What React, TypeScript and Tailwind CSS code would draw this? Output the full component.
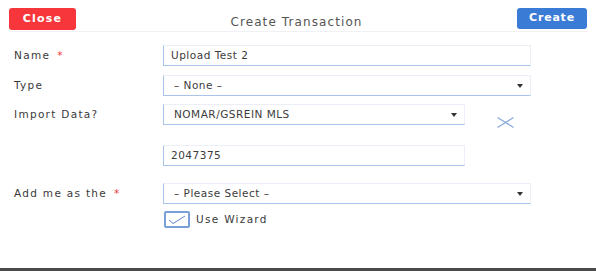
const font = { fontFamily: '"DejaVu Sans", "Open Sans", sans-serif' };

function Field({ value, select, width }: { value: string; select?: boolean; width: string }) {
  return (
    <div
      className={`flex items-center justify-between h-[21px] ${width} border border-[#eceff8] border-l-[#a9c3ea] border-b-[#a9c3ea] bg-white ${select ? 'pl-[10px]' : 'pl-[7px]'} pr-[7px]`}
    >
      <span className="text-[10.5px] text-[#3c3c3c] tracking-[0.5px]">{value}</span>
      {select && (
        <span className="w-0 h-0 border-l-[3px] border-r-[3px] border-t-[4px] border-l-transparent border-r-transparent border-t-[#333]" />
      )}
    </div>
  );
}

function Label({ text, required }: { text: string; required?: boolean }) {
  return (
    <span className="w-[149px] shrink-0 text-[10.5px] text-[#3a3a3a] tracking-[1.3px]">
      {text}
      {required && <span className="text-[#f0393d] ml-[7px]">*</span>}
    </span>
  );
}

export default function App() {
  return (
    <div className="w-[596px] h-[271px] bg-white flex flex-col border-b-[3px] border-[#4a4a4a]" style={font}>
      {/* Header */}
      <div className="mx-[9px] mt-[8px] h-[24px] flex items-start justify-between border-b border-[#f0f1f5]">
        <button className="w-[67px] h-[22px] rounded-[3px] bg-[#f6363a] text-white text-[11px] font-bold tracking-[1.2px]">
          Close
        </button>
        <span className="mt-[5px] text-[12px] text-[#555] tracking-[1.1px]">Create Transaction</span>
        <button className="w-[70px] h-[21px] rounded-[3px] bg-[#3a7bd5] text-white text-[11px] font-bold tracking-[0.8px]">
          Create
        </button>
      </div>

      {/* Form */}
      <div className="flex flex-col pl-[14px] mt-[13px]">
        <div className="flex items-center h-[21px]">
          <Label text="Name" required />
          <Field value="Upload Test 2" width="w-[368px]" />
        </div>
        <div className="flex items-center h-[21px] mt-[9px]">
          <Label text="Type" />
          <Field value="– None –" select width="w-[368px]" />
        </div>
        <div className="flex items-center h-[21px] mt-[8px]">
          <Label text="Import Data?" />
          <Field value="NOMAR/GSREIN MLS" select width="w-[302px]" />
          <svg width="17" height="11" viewBox="0 0 17 11" className="ml-[32px] mt-[16px]">
            <path d="M0.5 0.5 L16.5 10.5 M16.5 0.5 L0.5 10.5" stroke="#8aa8dc" strokeWidth="1.2" />
          </svg>
        </div>
        <div className="flex items-center h-[21px] mt-[20px]">
          <span className="w-[149px] shrink-0" />
          <Field value="2047375" width="w-[302px]" />
        </div>
        <div className="flex items-center h-[21px] mt-[17px]">
          <Label text="Add me as the" required />
          <Field value="– Please Select –" select width="w-[368px]" />
        </div>
        <div className="flex items-center mt-[7px] ml-[150px]">
          <span className="w-[26px] h-[17px] border-2 border-[#7a9fd8] rounded-[2px] flex items-center justify-center">
            <svg width="18" height="10" viewBox="0 0 18 10" fill="none">
              <path d="M1 5 L5 8.5 L17 1" stroke="#5d86c9" strokeWidth="1" />
            </svg>
          </span>
          <span className="ml-[6px] text-[10.5px] text-[#3a3a3a] tracking-[1.3px]">Use Wizard</span>
        </div>
      </div>
    </div>
  );
}
